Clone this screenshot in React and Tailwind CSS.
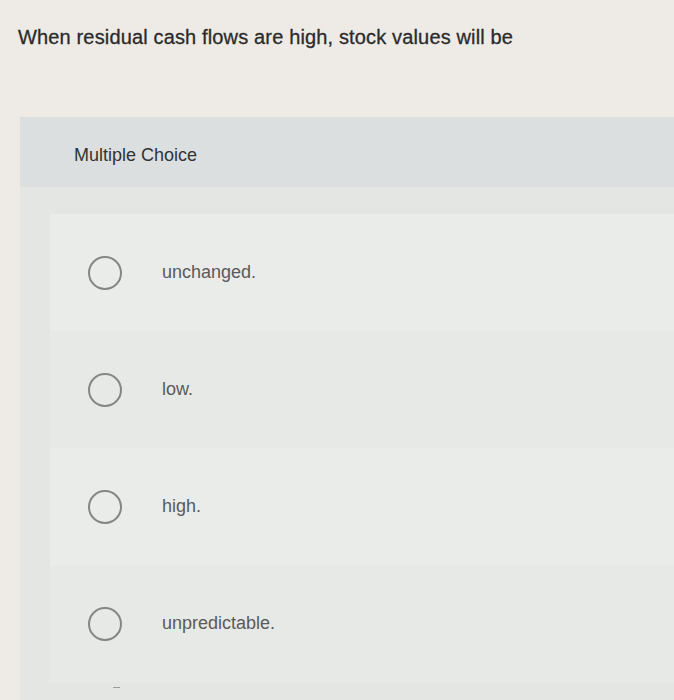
import React from 'react';

const options = ['unchanged.', 'low.', 'high.', 'unpredictable.'];

function Radio() {
  return <span className="w-[34px] h-[34px] rounded-full border-2 border-[#858785] shrink-0" />;
}

export default function App() {
  return (
    <div
      className="min-h-[700px] h-[700px] overflow-hidden bg-[#eeebe6] text-[#2b2b2b]"
      style={{ fontFamily: '"Liberation Sans", Arial, sans-serif' }}
    >
      <p className="pt-[24px] pl-[18px] text-[20px] leading-[26px] tracking-[0.15px] [-webkit-text-stroke:0.3px_#2b2b2b]">
        When residual cash flows are high, stock values will be
      </p>

      <div className="mt-[67px] ml-[20px] bg-[#e4e6e4]">
        <div className="h-[70px] bg-[#dcdfdf] flex items-center pl-[54px] pt-[6px] text-[18px] text-[#333]">
          Multiple Choice
        </div>

        <div className="pt-[27px] pl-[30px]">
          {options.map((opt, i) => (
            <div
              key={opt}
              className={`h-[117px] flex items-center pl-[38px] ${i % 2 === 0 ? 'bg-[#eaecea]' : 'bg-[#e7e9e7]'}`}
            >
              <Radio />
              <span className="ml-[40px] text-[18px] text-[#5a5a5a]">{opt}</span>
            </div>
          ))}
          <div className="h-[20px] pl-[63px] pt-[5px]">
            <div className="w-[7px] h-[1px] bg-[#9a9a9a]" />
          </div>
        </div>
      </div>
    </div>
  );
}
